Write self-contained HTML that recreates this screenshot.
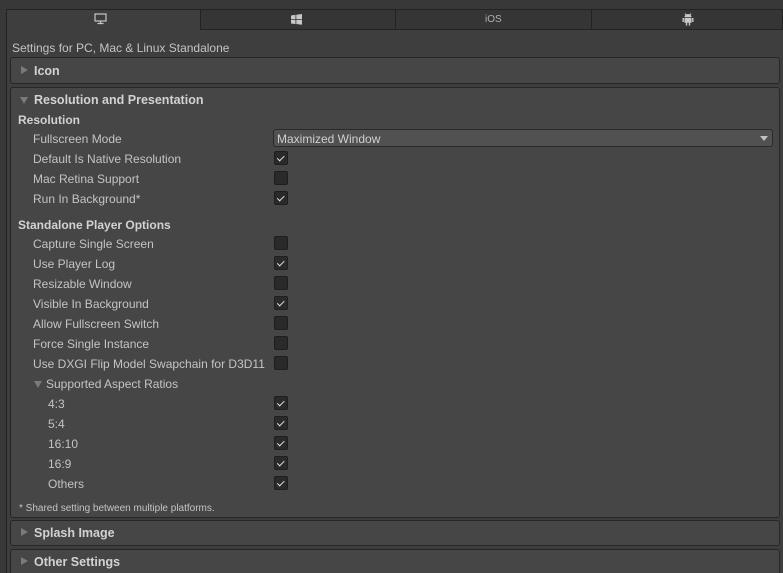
<!DOCTYPE html><html style="overflow:hidden"><head><style>
body{margin:0;width:783px;height:573px;background:#383838;overflow:hidden;position:relative;font-family:"Liberation Sans",sans-serif;font-size:12px;color:#c4c4c4}
.a{position:absolute}
.t{margin-top:1px}
.tab{position:absolute;top:9px;height:21px;background:#353535;border:1px solid #232323;box-sizing:border-box}
.box{position:absolute;left:10px;width:770px;background:#464646;border:1px solid #262626;border-radius:3px;box-sizing:border-box}
.fh{position:absolute;font-weight:bold;font-size:12.5px;color:#d2d2d2;margin-top:1px}
.tri{position:absolute;width:0;height:0}
.tr{border-left:7px solid #7a7a7a;border-top:4.5px solid transparent;border-bottom:4.5px solid transparent}
.td{border-top:7px solid #7a7a7a;border-left:4.5px solid transparent;border-right:4.5px solid transparent}
.lb{position:absolute;left:33px;margin-top:1px}
.cb{position:absolute;left:274px;width:12px;height:12px;background:#2a2a2a;border:1px solid #1e1e1e;border-radius:2px}
.cb.c::after{content:"";position:absolute;left:4px;top:1.5px;width:2.5px;height:5.5px;border:solid #e0e0e0;border-width:0 1.6px 1.6px 0;transform:rotate(45deg)}
</style></head><body>
<div class="a" style="left:6px;top:30px;width:777px;height:543px;background:#3e3e3e"></div>
<div class="a" style="left:6px;top:9px;width:1px;height:564px;background:#232323"></div>
<div class="tab" style="left:6px;width:195px;background:#3e3e3e;border-bottom:none"></div>
<div class="tab" style="left:200px;width:196px"></div>
<div class="tab" style="left:395px;width:197px"></div>
<div class="tab" style="left:591px;width:192px"></div>
<svg class="a" style="left:94px;top:13px" width="13" height="12" viewBox="0 0 13 12"><rect x="1" y="1" width="11" height="7" fill="none" stroke="#c8c8c8" stroke-width="1.2"/><path d="M6.5 8v2M3.5 10.5h6" stroke="#c8c8c8" stroke-width="1.2"/></svg>
<svg class="a" style="left:291px;top:14px" width="11" height="11" viewBox="0 0 11 11"><path d="M0 1.5l4.5-.7v4.2H0zM5.3.7L11 0v5H5.3zM0 5.8h4.5v4.3L0 9.5zM5.3 5.8H11v5l-5.7-.8z" fill="#c8c8c8"/></svg>
<div class="a t" style="left:485px;top:13px;font-size:10px;color:#b0b0b0">iOS</div>
<svg class="a" style="left:682px;top:12px" width="12" height="15" viewBox="0 0 12 15"><path d="M2.5 5a3.5 3 0 0 1 7 0z M2.5 5.8h7v5h-7z M0.5 6h1.4v4H0.5z M10.1 6h1.4v4h-1.4z M3.8 10.5h1.4v3H3.8z M6.8 10.5h1.4v3H6.8z" fill="#c8c8c8"/><path d="M3 1.5l1 1.5M9 1.5l-1 1.5" stroke="#c8c8c8"/></svg>
<div class="a t" style="left:12px;top:40px">Settings for PC, Mac &amp; Linux Standalone</div>
<div class="box" style="top:57px;height:27px"></div>
<div class="tri tr" style="left:21px;top:66px"></div><div class="fh" style="left:34px;top:63px">Icon</div>
<div class="box" style="top:87px;height:431px"></div>
<div class="tri td" style="left:20px;top:97px"></div><div class="fh" style="left:34px;top:92px">Resolution and Presentation</div>
<div class="fh" style="left:18px;top:112px;font-size:12px">Resolution</div>
<div class="lb" style="top:131px">Fullscreen Mode</div>
<div class="a" style="left:273px;top:129px;width:500px;height:18px;background:#515151;border:1px solid #2a2a2a;border-radius:3px;box-sizing:border-box"></div>
<div class="a t" style="left:277px;top:131px;color:#d0d0d0">Maximized Window</div>
<div class="tri td" style="left:760px;top:136px;border-top-width:5px;border-top-color:#c0c0c0;border-left-width:4px;border-right-width:4px"></div>
<div class="lb" style="top:151px">Default Is Native Resolution</div><div class="cb c" style="top:151px"></div>
<div class="lb" style="top:171px">Mac Retina Support</div><div class="cb" style="top:171px"></div>
<div class="lb" style="top:191px">Run In Background*</div><div class="cb c" style="top:191px"></div>
<div class="fh" style="left:18px;top:217px;font-size:12px">Standalone Player Options</div>
<div class="lb" style="top:236px">Capture Single Screen</div><div class="cb" style="top:236px"></div>
<div class="lb" style="top:256px">Use Player Log</div><div class="cb c" style="top:256px"></div>
<div class="lb" style="top:276px">Resizable Window</div><div class="cb" style="top:276px"></div>
<div class="lb" style="top:296px">Visible In Background</div><div class="cb c" style="top:296px"></div>
<div class="lb" style="top:316px">Allow Fullscreen Switch</div><div class="cb" style="top:316px"></div>
<div class="lb" style="top:336px">Force Single Instance</div><div class="cb" style="top:336px"></div>
<div class="lb" style="top:356px">Use DXGI Flip Model Swapchain for D3D11</div><div class="cb" style="top:356px"></div>
<div class="tri td" style="left:34px;top:381px"></div><div class="a t" style="left:46px;top:376px">Supported Aspect Ratios</div>
<div class="a t" style="left:48px;top:396px">4:3</div><div class="cb c" style="top:396px"></div>
<div class="a t" style="left:48px;top:416px">5:4</div><div class="cb c" style="top:416px"></div>
<div class="a t" style="left:48px;top:436px">16:10</div><div class="cb c" style="top:436px"></div>
<div class="a t" style="left:48px;top:456px">16:9</div><div class="cb c" style="top:456px"></div>
<div class="a t" style="left:48px;top:476px">Others</div><div class="cb c" style="top:476px"></div>
<div class="a t" style="left:19px;top:502px;font-size:10px">* Shared setting between multiple platforms.</div>
<div class="box" style="top:520px;height:26px"></div>
<div class="tri tr" style="left:21px;top:528px"></div><div class="fh" style="left:34px;top:525px">Splash Image</div>
<div class="box" style="top:549px;height:30px"></div>
<div class="tri tr" style="left:21px;top:557px"></div><div class="fh" style="left:34px;top:554px">Other Settings</div>
</body></html>
